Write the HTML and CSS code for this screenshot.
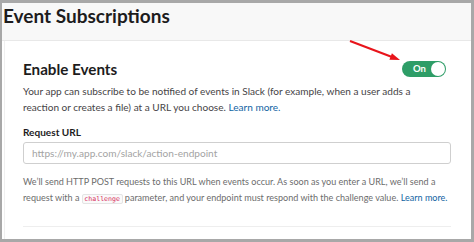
FILE: index.html
```html
<!DOCTYPE html>
<html>
<head>
<meta charset="utf-8">
<link rel="stylesheet" href="styles.css">
</head>
<body>
<div class="frame">
  <div class="header"><h1 class="title">Event Subscriptions</h1></div>
  <div class="content">
    <div class="section-head">
      <h2 class="heading">Enable Events</h2>
      <div class="toggle"><span class="toggle-label">On</span><span class="knob"></span></div>
    </div>
    <p class="desc">Your app can subscribe to be notified of events in Slack (for example, when a user adds a reaction or creates a file) at a URL you choose. <a class="link">Learn more.</a></p>
    <label class="label">Request URL</label>
    <div class="input">https://my.app.com/slack/action-endpoint</div>
    <p class="help">We’ll send HTTP POST requests to this URL when events occur. As soon as you enter a URL, we’ll send a request with a <code class="code">challenge</code> parameter, and your endpoint must respond with the challenge value. <a class="link">Learn more.</a></p>
    <div class="rule"></div>
  </div>
  <svg class="arrow" width="56" height="26" viewBox="0 0 56 26">
    <line x1="2" y1="2" x2="44" y2="18" stroke="#e8141b" stroke-width="2"/>
    <polygon points="52,21 41.4,20.7 43.9,14.2" fill="#e8141b"/>
  </svg>
</div>
</body>
</html>
```
FILE: styles.css
```css
html, body { margin: 0; padding: 0; }
body { width: 474px; height: 242px; background: #a8a8a8; font-family: Lato, "Open Sans", sans-serif; overflow: hidden; }
.frame { position: relative; margin: 3px 3px 0 2px; height: 236px; background: #fff; display: flex; flex-direction: column; }
.header { background: #f8f8f8; height: 38px; border-bottom: 1px solid #e8e8e8; box-sizing: border-box; padding-top: 2px; }
.title { margin: 0 0 0 1px; font-size: 19px; line-height: 22px; font-weight: 700; color: #1d1c1d; }
.content { padding: 19px 20px 0 18px; border-left: 1px solid #f0f0f0; margin-left: 2px; flex: 1; }
.section-head { display: flex; justify-content: space-between; align-items: center; height: 18px; }
.heading { margin: 0; font-size: 15.2px; font-weight: 700; color: #1d1c1d; line-height: 18px; }
.toggle { width: 44px; height: 16px; border-radius: 8px; background: #2e9d67; display: flex; align-items: center; justify-content: space-between; padding: 0 1px 0 11px; box-sizing: border-box; margin-right: 5px; }
.toggle-label { color: #fff; font-size: 9.5px; font-weight: 700; line-height: 16px; }
.knob { width: 14px; height: 14px; border-radius: 50%; background: #fff; }
.desc { margin: 5px 0 0; max-width: 410px; font-size: 10.05px; line-height: 16px; color: #464446; }
.link { color: #1264a3; }
.label { display: block; margin-top: 10px; font-size: 10.05px; line-height: 14px; font-weight: 700; color: #1d1c1d; }
.input { margin-top: 3px; height: 22px; border: 1px solid #cfcfcf; border-radius: 3px; padding: 0 8px; font-size: 10.1px; line-height: 20px; color: #a3a3a3; box-sizing: border-box; }
.help { margin: 10px 0 0; font-size: 9.05px; line-height: 16px; color: #6c6c6c; }
.code { font-family: "DejaVu Sans Mono", monospace; font-size: 6.6px; color: #d72b5a; background: #fafafa; border: 1px solid #e4e4e4; border-radius: 2px; padding: 0 1.5px; }
.rule { margin-top: 19px; height: 1px; background: #eeeeee; }
.arrow { position: absolute; left: 346px; top: 36px; }
```
